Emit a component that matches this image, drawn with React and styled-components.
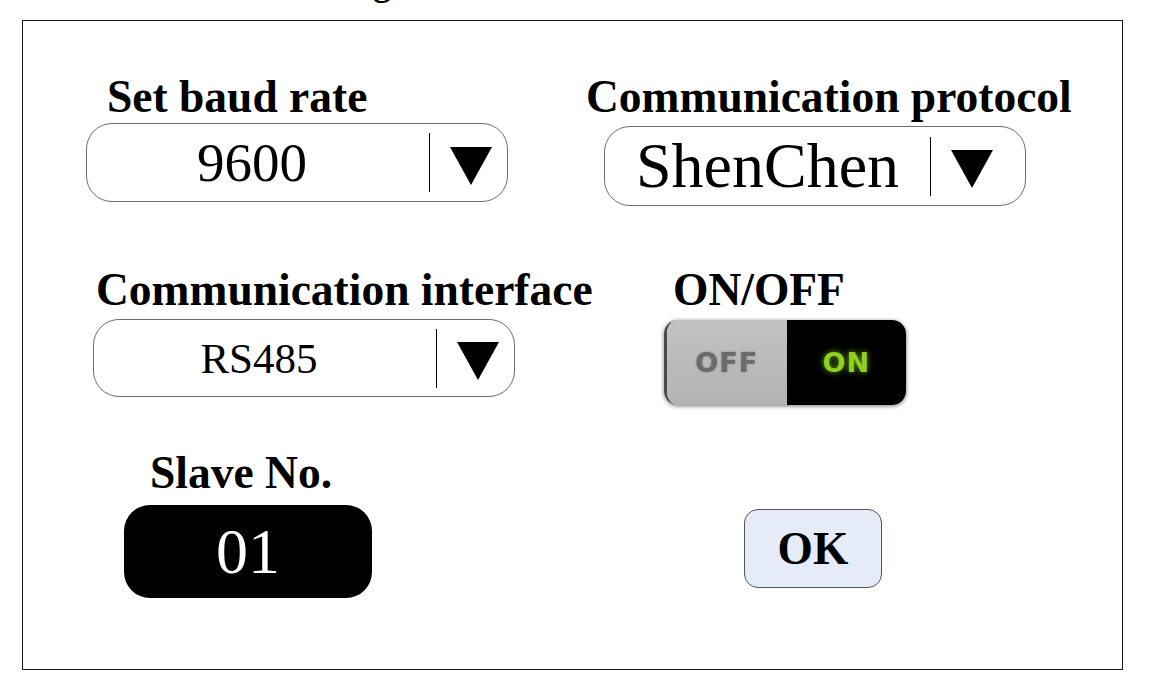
import React from "react"
import styled, { createGlobalStyle } from "styled-components"

const GlobalStyle = createGlobalStyle`
  body {
    margin: 0;
    background: #ffffff;
    font-family: "Liberation Serif", "Times New Roman", serif;
    color: #000;
  }
`

const Arrow = () => (
  <svg width="42" height="38" viewBox="0 0 42 38">
    <polygon points="0,0 42,0 21,38" fill="#000" />
  </svg>
)

const Dropdown = ({ value, size, valueWidth, pad, ...rest }) => (
  <Select {...rest}>
    <Value $size={size} $width={valueWidth} $pad={pad}>{value}</Value>
    <Divider />
    <ArrowBox>
      <Arrow />
    </ArrowBox>
  </Select>
)

const App = () => {
  return (
    <>
      <GlobalStyle />
      <Page>
        <TitleClip>
          <Title>Communication Setting</Title>
        </TitleClip>
        <Frame>
          <Row>
            <Field $width={500}>
              <Label $indent={21}>Set baud rate</Label>
              <Dropdown value="9600" size={55} valueWidth={342} pad={12} $top={1} $left={0} $height={79} />
            </Field>
            <Field>
              <Label $indent={0}>Communication protocol</Label>
              <Dropdown value="ShenChen" size={64} valueWidth={325} pad={0} $top={4} $left={18} $height={80} />
            </Field>
          </Row>

          <Row $gap={59}>
            <Field $width={500}>
              <Label $indent={10}>Communication interface</Label>
              <Dropdown value="RS485" size={43} valueWidth={342} pad={12} $top={4} $left={7} $height={78} />
            </Field>
            <Field>
              <Label $indent={87}>ON/OFF</Label>
              <Toggle>
                <ToggleHalf $on={false}>OFF</ToggleHalf>
                <ToggleHalf $on={true}>ON</ToggleHalf>
              </Toggle>
            </Field>
          </Row>

          <Row $gap={43}>
            <Field $width={500}>
              <Label $indent={64}>Slave No.</Label>
              <SlaveBox>01</SlaveBox>
            </Field>
            <Field>
              <OkButton>OK</OkButton>
            </Field>
          </Row>
        </Frame>
      </Page>
    </>
  )
}

export default App

const Page = styled.div`
  width: 1153px;
  height: 691px;
  overflow: hidden;
`
const TitleClip = styled.div`
  height: 5px;
  margin-bottom: 15px;
  padding-left: 26px;
  overflow: hidden;
  display: flex;
  align-items: flex-end;
`
const Title = styled.div`
  font-size: 36px;
  font-weight: 700;
  line-height: 1.2;
  white-space: nowrap;
`
const Frame = styled.div`
  box-sizing: border-box;
  margin-left: 22px;
  width: 1101px;
  height: 650px;
  border: 1px solid #1a1a1a;
  padding: 51px 0 0 63px;
`
const Row = styled.div`
  display: flex;
  align-items: flex-start;
  margin-top: ${(p) => p.$gap || 0}px;
`
const Field = styled.div`
  display: flex;
  flex-direction: column;
  align-items: flex-start;
  width: ${(p) => (p.$width ? `${p.$width}px` : "auto")};
  flex-shrink: 0;
`
const Label = styled.div`
  font-size: 45.5px;
  font-weight: 700;
  line-height: 50px;
  white-space: nowrap;
  margin-left: ${(p) => p.$indent}px;
`
const Select = styled.div`
  box-sizing: border-box;
  width: 422px;
  height: ${(p) => p.$height}px;
  margin-top: ${(p) => p.$top}px;
  margin-left: ${(p) => p.$left}px;
  border: 1px solid #6f6f6f;
  border-radius: 26px;
  display: flex;
  align-items: center;
  background: #fff;
`
const Value = styled.div`
  box-sizing: border-box;
  width: ${(p) => p.$width}px;
  padding-right: ${(p) => p.$pad}px;
  flex-shrink: 0;
  text-align: center;
  font-size: ${(p) => p.$size}px;
  line-height: 1;
  white-space: nowrap;
`
const Divider = styled.div`
  width: 1px;
  height: 59px;
  background: #000;
`
const ArrowBox = styled.div`
  display: flex;
  align-items: center;
  padding: 6px 0 0 20px;
`
const Toggle = styled.div`
  box-sizing: border-box;
  display: flex;
  width: 242px;
  height: 85px;
  margin-top: 5px;
  margin-left: 78px;
  border-radius: 14px;
  overflow: hidden;
  border-left: 3px solid #4a4a4a;
  box-shadow: 0 1px 4px rgba(0, 0, 0, 0.55);
`
const ToggleHalf = styled.div`
  flex: 1;
  display: flex;
  align-items: center;
  justify-content: center;
  font-family: "DejaVu Sans", "Liberation Sans", sans-serif;
  font-weight: 700;
  font-size: 27px;
  letter-spacing: 1px;
  background: ${(p) => (p.$on ? "#000" : "linear-gradient(#c2c2c2, #b3b3b3)")};
  color: ${(p) => (p.$on ? "#8fd11e" : "#6b6b6b")};
  text-shadow: ${(p) =>
    p.$on ? "0 0 6px rgba(130, 200, 20, 0.8)" : "0 0 2px rgba(90, 90, 90, 0.7)"};
`
const SlaveBox = styled.div`
  box-sizing: border-box;
  width: 248px;
  height: 93px;
  margin-top: 7px;
  margin-left: 38px;
  border-radius: 26px;
  background: #000;
  color: #fff;
  font-size: 64px;
  display: flex;
  align-items: center;
  justify-content: center;
  line-height: 1;
`
const OkButton = styled.div`
  box-sizing: border-box;
  width: 138px;
  height: 79px;
  margin-top: 61px;
  margin-left: 158px;
  border: 1px solid #555;
  border-radius: 14px;
  background: #e6ecf7;
  font-size: 45.5px;
  font-weight: 700;
  display: flex;
  align-items: center;
  justify-content: center;
  line-height: 1;
`
